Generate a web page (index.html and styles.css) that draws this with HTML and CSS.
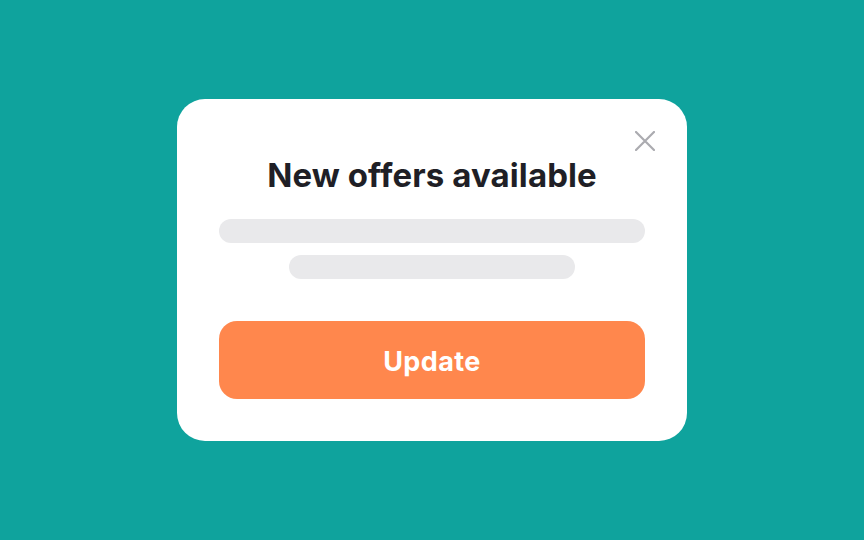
FILE: index.html
```html
<!DOCTYPE html>
<html lang="en">
<head>
<meta charset="utf-8">
<title>New offers available</title>
<link rel="stylesheet" href="styles.css">
</head>
<body>
<main class="stage">
  <section class="card">
    <button class="close" aria-label="Close">
      <svg width="20" height="20" viewBox="0 0 20 20" fill="none" stroke="#ababb0" stroke-width="2.2" stroke-linecap="round"><path d="M1 1L19 19M19 1L1 19"/></svg>
    </button>
    <h1 class="title">New offers available</h1>
    <div class="line line-long"></div>
    <div class="line line-short"></div>
    <button class="update">Update</button>
  </section>
</main>
</body>
</html>
```
FILE: styles.css
```css
* { box-sizing: border-box; }
html, body { margin: 0; padding: 0; }
body {
  width: 864px;
  height: 540px;
  background: #0fa39d;
  font-family: Inter, "Noto Sans", sans-serif;
  overflow: hidden;
}
.stage {
  width: 100%;
  height: 100%;
  display: flex;
  align-items: center;
  justify-content: center;
}
.card {
  position: relative;
  width: 510px;
  height: 342px;
  background: #ffffff;
  border-radius: 28px;
  padding: 56px 42px 42px;
  display: flex;
  flex-direction: column;
  align-items: center;
}
.close {
  position: absolute;
  top: 32px;
  right: 32px;
  width: 20px;
  height: 20px;
  padding: 0;
  border: 0;
  background: none;
  display: block;
}
.close svg { display: block; }
.title {
  margin: 0;
  font-size: 33px;
  line-height: 40px;
  font-weight: 700;
  color: #1f1f26;
  letter-spacing: 0.1px;
}
.line {
  height: 24px;
  border-radius: 12px;
  background: #e9e9eb;
}
.line-long { width: 426px; margin-top: 24px; }
.line-short { width: 286px; margin-top: 12px; }
.update {
  margin-top: 42px;
  width: 426px;
  height: 78px;
  border: 0;
  border-radius: 18px;
  background: #ff874d;
  color: #ffffff;
  font-family: Inter, "Noto Sans", sans-serif;
  font-size: 27px;
  font-weight: 700;
  letter-spacing: 0.4px;
  padding: 2px 0 0;
}
```
